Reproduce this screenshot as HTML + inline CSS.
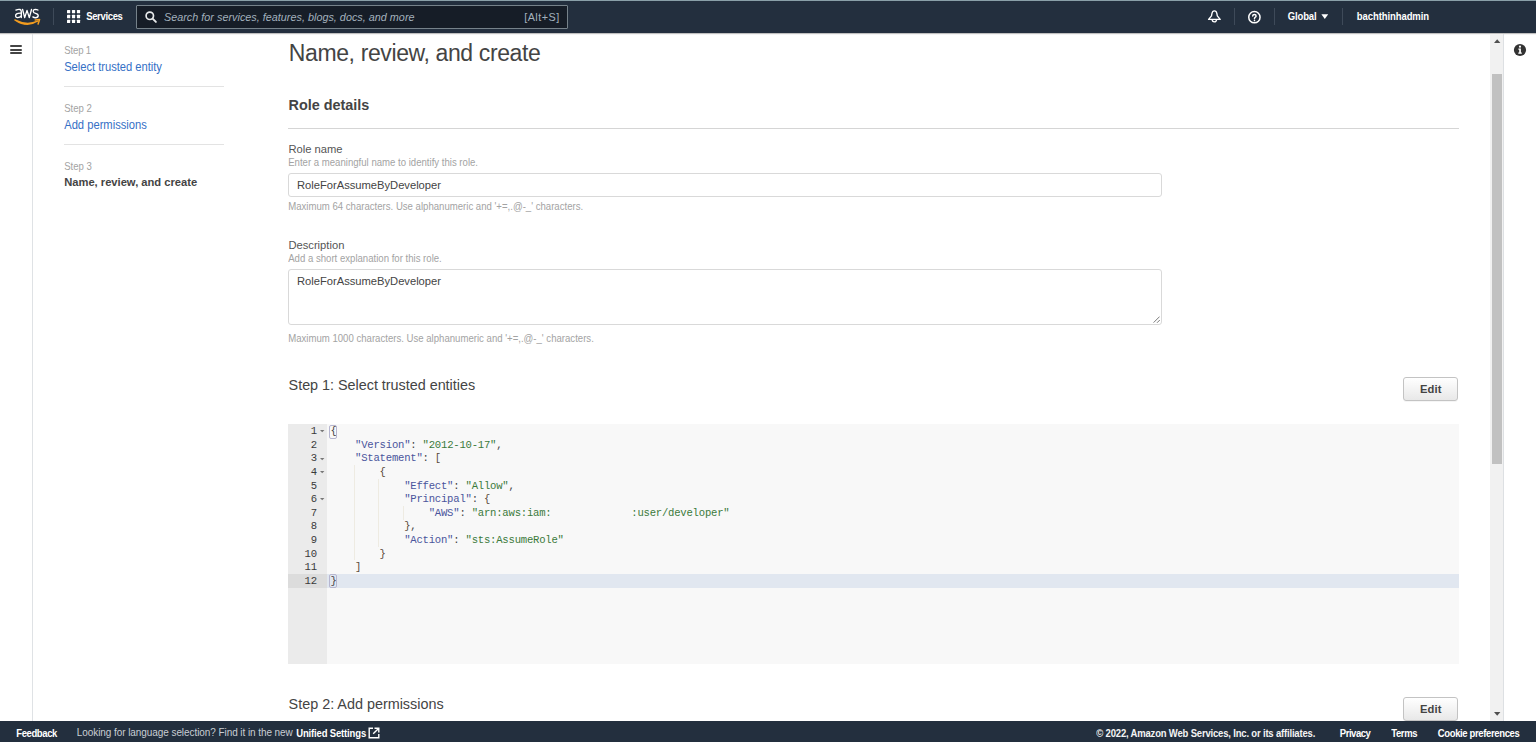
<!DOCTYPE html>
<html><head><meta charset="utf-8"><title>IAM - Create role</title>
<style>
html,body{margin:0;padding:0;width:1536px;height:742px;overflow:hidden;background:#fff;}
body{position:relative;font-family:"Liberation Sans", sans-serif;}
#nav{position:absolute;left:0;top:0;width:1536px;height:33px;background:#232f3e;box-shadow:0 1px 1px rgba(0,0,0,0.25);}
.t{position:absolute;white-space:nowrap;font-family:"Liberation Sans", sans-serif;}
.m{position:absolute;white-space:nowrap;font-family:"Liberation Mono", monospace;color:#333;}
</style></head><body>
<div id="nav"></div>
<div style="position:absolute;left:0;top:0;width:1536px;height:1px;background:#8aa0a8"></div>
<svg style="position:absolute;left:13px;top:7px" width="30" height="20" viewBox="0 0 30 20">
<g stroke="#ffffff" stroke-width="1.35" fill="none" stroke-linecap="round" stroke-linejoin="round">
<path d="M2.9 3.1 Q5.4 2.0 7.0 2.5 Q8.3 3.0 8.3 4.6 L8.3 10.6"/>
<path d="M8.3 6.2 Q5.2 6.0 3.6 6.9 Q2.4 7.7 2.6 9.1 Q2.9 10.7 4.7 10.6 Q6.9 10.4 8.3 9.0"/>
<path d="M9.6 2.5 L11.7 10.6 L14.0 3.4 L16.3 10.6 L18.5 2.5"/>
<path d="M24.9 3.0 Q23.9 2.3 22.4 2.3 Q20.2 2.4 20.2 4.2 Q20.3 5.8 22.5 6.3 Q25.2 6.9 25.2 8.6 Q25.1 10.7 22.5 10.7 Q20.9 10.7 19.9 9.9"/>
</g>
<path d="M1.8 12.9 Q13.8 21.2 24.8 14.1 Q13.8 19.0 1.8 12.9 Z" fill="#f29c1f" stroke="#f29c1f" stroke-width="1.2" stroke-linejoin="round"/>
<path d="M22.2 13.0 L26.6 12.6 L25.1 17.0" stroke="#f29c1f" stroke-width="1.5" fill="none" stroke-linejoin="round" stroke-linecap="round"/>
</svg>
<div style="position:absolute;left:53px;top:8px;width:1px;height:17px;background:#3e4a59"></div>
<svg style="position:absolute;left:67.1px;top:10.2px" width="14" height="14" viewBox="0 0 14 14"><rect x="0.00" y="0.00" width="3.2" height="3.3" rx="0.5" fill="#fff"/><rect x="4.95" y="0.00" width="3.2" height="3.3" rx="0.5" fill="#fff"/><rect x="9.90" y="0.00" width="3.2" height="3.3" rx="0.5" fill="#fff"/><rect x="0.00" y="4.85" width="3.2" height="3.3" rx="0.5" fill="#fff"/><rect x="4.95" y="4.85" width="3.2" height="3.3" rx="0.5" fill="#fff"/><rect x="9.90" y="4.85" width="3.2" height="3.3" rx="0.5" fill="#fff"/><rect x="0.00" y="9.70" width="3.2" height="3.3" rx="0.5" fill="#fff"/><rect x="4.95" y="9.70" width="3.2" height="3.3" rx="0.5" fill="#fff"/><rect x="9.90" y="9.70" width="3.2" height="3.3" rx="0.5" fill="#fff"/></svg>
<div class="t" style="left:86.2px;top:12.36px;font-size:9.5px;line-height:9.5px;color:#ffffff;font-weight:bold;font-style:normal;transform:scaleY(1.08);transform-origin:0 8.04px;letter-spacing:-0.342px;">Services</div>
<div style="position:absolute;left:136px;top:5px;width:430px;height:21.5px;background:#161d27;border:1px solid #76828a;border-radius:1px"></div>
<svg style="position:absolute;left:145px;top:11px" width="13" height="13" viewBox="0 0 13 13">
<circle cx="4.8" cy="4.8" r="3.7" stroke="#e8eaeb" stroke-width="1.7" fill="none"/>
<path d="M7.6 7.6 L10.9 10.9" stroke="#e8eaeb" stroke-width="1.9" stroke-linecap="round"/></svg>
<div class="t" style="left:164px;top:12.46px;font-size:10.8px;line-height:10.8px;color:#a3b1bd;font-weight:normal;font-style:italic;transform:scaleY(1.05);transform-origin:0 9.14px;letter-spacing:0.017px;">Search for services, features, blogs, docs, and more</div>
<div class="t" style="left:524.2px;top:11.66px;font-size:10.8px;line-height:10.8px;color:#a3b1bd;font-weight:normal;font-style:normal;letter-spacing:0.482px;">[Alt+S]</div>
<svg style="position:absolute;left:1204px;top:6px" width="20" height="20" viewBox="0 0 20 20">
<path d="M10.4 4.9 C9.1 4.9 8.2 5.9 7.9 7.7 L7.5 9.9 L4.6 13.4 L16.2 13.4 L13.3 9.9 L12.9 7.7 C12.6 5.9 11.7 4.9 10.4 4.9 Z" stroke="#fff" stroke-width="1.35" fill="none" stroke-linejoin="round"/>
<path d="M8.2 13.6 A2.2 2.2 0 0 0 12.6 13.6" stroke="#fff" stroke-width="1.35" fill="none"/></svg>
<div style="position:absolute;left:1234px;top:8px;width:1px;height:17px;background:#3e4a59"></div>
<svg style="position:absolute;left:1247px;top:9.5px" width="15" height="15" viewBox="0 0 15 15">
<circle cx="7.4" cy="7.2" r="5.65" stroke="#fff" stroke-width="1.5" fill="none"/>
<path d="M5.7 6.0 C5.7 5.0 6.5 4.5 7.4 4.5 C8.4 4.5 9.1 5.1 9.1 6.0 C9.1 7.1 7.5 7.3 7.5 8.4 L7.5 8.8" stroke="#fff" stroke-width="1.45" fill="none" stroke-linecap="round"/>
<circle cx="7.5" cy="10.6" r="0.8" fill="#fff"/></svg>
<div style="position:absolute;left:1273.5px;top:8px;width:1px;height:17px;background:#3e4a59"></div>
<div class="t" style="left:1287.8px;top:12.16px;font-size:9.5px;line-height:9.5px;color:#ffffff;font-weight:bold;font-style:normal;transform:scaleY(1.08);transform-origin:0 8.04px;letter-spacing:-0.152px;">Global</div>
<svg style="position:absolute;left:1321px;top:14px" width="8" height="6" viewBox="0 0 8 6"><path d="M0.4 0.3 L7.2 0.3 L3.8 5.1 Z" fill="#fff"/></svg>
<div style="position:absolute;left:1342px;top:8px;width:1px;height:17px;background:#3e4a59"></div>
<div class="t" style="left:1356.8px;top:12.16px;font-size:9.5px;line-height:9.5px;color:#ffffff;font-weight:bold;font-style:normal;transform:scaleY(1.08);transform-origin:0 8.04px;letter-spacing:-0.083px;">bachthinhadmin</div>
<div style="position:absolute;left:10px;top:45px;width:11.5px;height:2px;background:#444;border-radius:1px"></div>
<div style="position:absolute;left:10px;top:48.7px;width:11.5px;height:2px;background:#444;border-radius:1px"></div>
<div style="position:absolute;left:10px;top:52.4px;width:11.5px;height:2px;background:#444;border-radius:1px"></div>
<div style="position:absolute;left:32px;top:34px;width:1px;height:687px;background:#dfe2e5"></div>
<div class="t" style="left:64.2px;top:46.07px;font-size:9.6px;line-height:9.6px;color:#a3a3a3;font-weight:normal;font-style:normal;transform:scaleY(1.18);transform-origin:0 8.13px;letter-spacing:-0.150px;">Step 1</div>
<div class="t" style="left:64.2px;top:61.52px;font-size:11.2px;line-height:11.2px;color:#3570c6;font-weight:normal;font-style:normal;transform:scaleY(1.06);transform-origin:0 9.48px;letter-spacing:-0.028px;">Select trusted entity</div>
<div style="position:absolute;left:64px;top:86px;width:160px;height:1px;background:#e3e3e3"></div>
<div class="t" style="left:64.2px;top:104.07px;font-size:9.6px;line-height:9.6px;color:#a3a3a3;font-weight:normal;font-style:normal;transform:scaleY(1.18);transform-origin:0 8.13px;">Step 2</div>
<div class="t" style="left:64.2px;top:119.52px;font-size:11.2px;line-height:11.2px;color:#3570c6;font-weight:normal;font-style:normal;transform:scaleY(1.06);transform-origin:0 9.48px;">Add permissions</div>
<div style="position:absolute;left:64px;top:144px;width:160px;height:1px;background:#e3e3e3"></div>
<div class="t" style="left:64.2px;top:162.07px;font-size:9.6px;line-height:9.6px;color:#a3a3a3;font-weight:normal;font-style:normal;transform:scaleY(1.18);transform-origin:0 8.13px;">Step 3</div>
<div class="t" style="left:64.2px;top:177.32px;font-size:11.2px;line-height:11.2px;color:#444444;font-weight:bold;font-style:normal;letter-spacing:-0.013px;">Name, review, and create</div>
<div class="t" style="left:288.8px;top:41.93px;font-size:23.0px;line-height:23.0px;color:#444444;font-weight:normal;font-style:normal;letter-spacing:-0.382px;">Name, review, and create</div>
<div class="t" style="left:288.6px;top:97.81px;font-size:14.4px;line-height:14.4px;color:#444444;font-weight:bold;font-style:normal;transform:scaleY(1.07);transform-origin:0 12.19px;">Role details</div>
<div style="position:absolute;left:288px;top:128px;width:1171px;height:1px;background:#d5d5d5"></div>
<div class="t" style="left:288.4px;top:143.52px;font-size:11.2px;line-height:11.2px;color:#555555;font-weight:normal;font-style:normal;transform:scaleY(1.03);transform-origin:0 9.48px;">Role name</div>
<div class="t" style="left:288.2px;top:157.77px;font-size:9.6px;line-height:9.6px;color:#a3a3a3;font-weight:normal;font-style:normal;transform:scaleY(1.18);transform-origin:0 8.13px;">Enter a meaningful name to identify this role.</div>
<div style="position:absolute;left:288px;top:173px;width:872px;height:22px;border:1px solid #d9d9d9;border-radius:3px;background:#fff"></div>
<div class="t" style="left:297px;top:180.12px;font-size:11.2px;line-height:11.2px;color:#444444;font-weight:normal;font-style:normal;transform:scaleY(1.03);transform-origin:0 9.48px;letter-spacing:-0.012px;">RoleForAssumeByDeveloper</div>
<div class="t" style="left:288.2px;top:201.77px;font-size:9.6px;line-height:9.6px;color:#a3a3a3;font-weight:normal;font-style:normal;transform:scaleY(1.18);transform-origin:0 8.13px;">Maximum 64 characters. Use alphanumeric and '+=,.@-_' characters.</div>
<div class="t" style="left:288.4px;top:239.52px;font-size:11.2px;line-height:11.2px;color:#555555;font-weight:normal;font-style:normal;transform:scaleY(1.03);transform-origin:0 9.48px;">Description</div>
<div class="t" style="left:288.2px;top:253.87px;font-size:9.6px;line-height:9.6px;color:#a3a3a3;font-weight:normal;font-style:normal;transform:scaleY(1.18);transform-origin:0 8.13px;">Add a short explanation for this role.</div>
<div style="position:absolute;left:288px;top:269px;width:872px;height:54px;border:1px solid #d9d9d9;border-radius:3px;background:#fff"></div>
<svg style="position:absolute;left:1151px;top:314px" width="9" height="9" viewBox="0 0 9 9"><path d="M2.6 8.6 L8.6 2.6 M6.0 8.8 L8.8 6.0" stroke="#6a6a6a" stroke-width="0.9"/></svg>
<div class="t" style="left:297px;top:276.12px;font-size:11.2px;line-height:11.2px;color:#444444;font-weight:normal;font-style:normal;transform:scaleY(1.03);transform-origin:0 9.48px;letter-spacing:-0.012px;">RoleForAssumeByDeveloper</div>
<div class="t" style="left:288.2px;top:333.87px;font-size:9.6px;line-height:9.6px;color:#a3a3a3;font-weight:normal;font-style:normal;transform:scaleY(1.18);transform-origin:0 8.13px;">Maximum 1000 characters. Use alphanumeric and '+=,.@-_' characters.</div>
<div class="t" style="left:288.6px;top:377.61px;font-size:14.4px;line-height:14.4px;color:#444444;font-weight:normal;font-style:normal;transform:scaleY(1.05);transform-origin:0 12.19px;letter-spacing:-0.023px;">Step 1: Select trusted entities</div>
<div style="position:absolute;left:1403px;top:377px;width:53px;height:21.5px;border:1px solid #c3c3c3;border-radius:3px;background:linear-gradient(#ffffff,#e8e8e8);box-shadow:0 1px 0 rgba(0,0,0,0.04)"></div>
<div class="t" style="left:1420.0px;top:383.92px;font-size:11.2px;line-height:11.2px;color:#444444;font-weight:bold;font-style:normal;letter-spacing:0.120px;">Edit</div>
<div style="position:absolute;left:288px;top:424px;width:1171px;height:240px;background:#f8f8f8"></div>
<div style="position:absolute;left:288px;top:424px;width:39px;height:240px;background:#ebebeb"></div>
<div style="position:absolute;left:327px;top:574.00px;width:1132px;height:13.6px;background:#e1e7f0"></div>
<div style="position:absolute;left:288px;top:574.00px;width:39px;height:13.6px;background:#dcdcdc"></div>
<div class="m" style="left:330.5px;top:425.28px;font-size:10.6px;line-height:13.6px;letter-spacing:-0.220px"><span style="color:#444">{</span></div>
<div class="m" style="left:288px;width:28.9px;text-align:right;top:425.28px;font-size:10.6px;line-height:13.6px;letter-spacing:-0.220px;color:#3a3a3a">1</div>
<div class="m" style="left:330.5px;top:438.88px;font-size:10.6px;line-height:13.6px;letter-spacing:-0.220px">&nbsp;&nbsp;&nbsp;&nbsp;<span style="color:#4a559c">"Version"</span><span style="color:#444">: </span><span style="color:#3b7a3b">"2012-10-17"</span><span style="color:#444">,</span></div>
<div class="m" style="left:288px;width:28.9px;text-align:right;top:438.88px;font-size:10.6px;line-height:13.6px;letter-spacing:-0.220px;color:#3a3a3a">2</div>
<div class="m" style="left:330.5px;top:452.48px;font-size:10.6px;line-height:13.6px;letter-spacing:-0.220px">&nbsp;&nbsp;&nbsp;&nbsp;<span style="color:#4a559c">"Statement"</span><span style="color:#444">: </span><span style="color:#5a4a38">[</span></div>
<div class="m" style="left:288px;width:28.9px;text-align:right;top:452.48px;font-size:10.6px;line-height:13.6px;letter-spacing:-0.220px;color:#3a3a3a">3</div>
<div class="m" style="left:330.5px;top:466.08px;font-size:10.6px;line-height:13.6px;letter-spacing:-0.220px">&nbsp;&nbsp;&nbsp;&nbsp;&nbsp;&nbsp;&nbsp;&nbsp;<span style="color:#5a4a38">{</span></div>
<div class="m" style="left:288px;width:28.9px;text-align:right;top:466.08px;font-size:10.6px;line-height:13.6px;letter-spacing:-0.220px;color:#3a3a3a">4</div>
<div class="m" style="left:330.5px;top:479.68px;font-size:10.6px;line-height:13.6px;letter-spacing:-0.220px">&nbsp;&nbsp;&nbsp;&nbsp;&nbsp;&nbsp;&nbsp;&nbsp;&nbsp;&nbsp;&nbsp;&nbsp;<span style="color:#4a559c">"Effect"</span><span style="color:#444">: </span><span style="color:#3b7a3b">"Allow"</span><span style="color:#444">,</span></div>
<div class="m" style="left:288px;width:28.9px;text-align:right;top:479.68px;font-size:10.6px;line-height:13.6px;letter-spacing:-0.220px;color:#3a3a3a">5</div>
<div class="m" style="left:330.5px;top:493.28px;font-size:10.6px;line-height:13.6px;letter-spacing:-0.220px">&nbsp;&nbsp;&nbsp;&nbsp;&nbsp;&nbsp;&nbsp;&nbsp;&nbsp;&nbsp;&nbsp;&nbsp;<span style="color:#4a559c">"Principal"</span><span style="color:#444">: </span><span style="color:#5a4a38">{</span></div>
<div class="m" style="left:288px;width:28.9px;text-align:right;top:493.28px;font-size:10.6px;line-height:13.6px;letter-spacing:-0.220px;color:#3a3a3a">6</div>
<div class="m" style="left:330.5px;top:506.88px;font-size:10.6px;line-height:13.6px;letter-spacing:-0.220px">&nbsp;&nbsp;&nbsp;&nbsp;&nbsp;&nbsp;&nbsp;&nbsp;&nbsp;&nbsp;&nbsp;&nbsp;&nbsp;&nbsp;&nbsp;&nbsp;<span style="color:#4a559c">"AWS"</span><span style="color:#444">: </span><span style="color:#3b7a3b">"arn:aws:iam:&nbsp;&nbsp;&nbsp;&nbsp;&nbsp;&nbsp;&nbsp;&nbsp;&nbsp;&nbsp;&nbsp;&nbsp;&nbsp;:user/developer"</span></div>
<div class="m" style="left:288px;width:28.9px;text-align:right;top:506.88px;font-size:10.6px;line-height:13.6px;letter-spacing:-0.220px;color:#3a3a3a">7</div>
<div class="m" style="left:330.5px;top:520.48px;font-size:10.6px;line-height:13.6px;letter-spacing:-0.220px">&nbsp;&nbsp;&nbsp;&nbsp;&nbsp;&nbsp;&nbsp;&nbsp;&nbsp;&nbsp;&nbsp;&nbsp;<span style="color:#5a4a38">}</span><span style="color:#444">,</span></div>
<div class="m" style="left:288px;width:28.9px;text-align:right;top:520.48px;font-size:10.6px;line-height:13.6px;letter-spacing:-0.220px;color:#3a3a3a">8</div>
<div class="m" style="left:330.5px;top:534.08px;font-size:10.6px;line-height:13.6px;letter-spacing:-0.220px">&nbsp;&nbsp;&nbsp;&nbsp;&nbsp;&nbsp;&nbsp;&nbsp;&nbsp;&nbsp;&nbsp;&nbsp;<span style="color:#4a559c">"Action"</span><span style="color:#444">: </span><span style="color:#3b7a3b">"sts:AssumeRole"</span></div>
<div class="m" style="left:288px;width:28.9px;text-align:right;top:534.08px;font-size:10.6px;line-height:13.6px;letter-spacing:-0.220px;color:#3a3a3a">9</div>
<div class="m" style="left:330.5px;top:547.68px;font-size:10.6px;line-height:13.6px;letter-spacing:-0.220px">&nbsp;&nbsp;&nbsp;&nbsp;&nbsp;&nbsp;&nbsp;&nbsp;<span style="color:#5a4a38">}</span></div>
<div class="m" style="left:288px;width:28.9px;text-align:right;top:547.68px;font-size:10.6px;line-height:13.6px;letter-spacing:-0.220px;color:#3a3a3a">10</div>
<div class="m" style="left:330.5px;top:561.28px;font-size:10.6px;line-height:13.6px;letter-spacing:-0.220px">&nbsp;&nbsp;&nbsp;&nbsp;<span style="color:#5a4a38">]</span></div>
<div class="m" style="left:288px;width:28.9px;text-align:right;top:561.28px;font-size:10.6px;line-height:13.6px;letter-spacing:-0.220px;color:#3a3a3a">11</div>
<div class="m" style="left:330.5px;top:574.88px;font-size:10.6px;line-height:13.6px;letter-spacing:-0.220px"><span style="color:#444">}</span></div>
<div class="m" style="left:288px;width:28.9px;text-align:right;top:574.88px;font-size:10.6px;line-height:13.6px;letter-spacing:-0.220px;color:#3a3a3a">12</div>
<svg style="position:absolute;left:320px;top:430.40px" width="5" height="3" viewBox="0 0 5 3"><path d="M0 0 L4.4 0 L2.2 2.2 Z" fill="#777"/></svg>
<svg style="position:absolute;left:320px;top:457.60px" width="5" height="3" viewBox="0 0 5 3"><path d="M0 0 L4.4 0 L2.2 2.2 Z" fill="#777"/></svg>
<svg style="position:absolute;left:320px;top:471.20px" width="5" height="3" viewBox="0 0 5 3"><path d="M0 0 L4.4 0 L2.2 2.2 Z" fill="#777"/></svg>
<svg style="position:absolute;left:320px;top:498.40px" width="5" height="3" viewBox="0 0 5 3"><path d="M0 0 L4.4 0 L2.2 2.2 Z" fill="#777"/></svg>
<div style="position:absolute;left:353.9px;top:465.20px;width:1px;height:95.20px;background:#eeebe2"></div>
<div style="position:absolute;left:378.4px;top:478.80px;width:1px;height:68.00px;background:#eeebe2"></div>
<div style="position:absolute;left:403.0px;top:506.00px;width:1px;height:13.60px;background:#eeebe2"></div>
<div style="position:absolute;left:329.2px;top:424.60px;width:5.9px;height:12.1px;border:1px solid #b6b6d0;border-radius:2px"></div>
<div style="position:absolute;left:329.2px;top:574.20px;width:5.9px;height:12.1px;border:1px solid #b6b6d0;border-radius:2px"></div>
<div class="t" style="left:288.6px;top:696.81px;font-size:14.4px;line-height:14.4px;color:#444444;font-weight:normal;font-style:normal;transform:scaleY(1.05);transform-origin:0 12.19px;letter-spacing:-0.009px;">Step 2: Add permissions</div>
<div style="position:absolute;left:1403px;top:697px;width:53px;height:21.5px;border:1px solid #c3c3c3;border-radius:3px;background:linear-gradient(#ffffff,#e8e8e8);box-shadow:0 1px 0 rgba(0,0,0,0.04)"></div>
<div class="t" style="left:1420.0px;top:703.92px;font-size:11.2px;line-height:11.2px;color:#444444;font-weight:bold;font-style:normal;letter-spacing:0.120px;">Edit</div>
<div style="position:absolute;left:1490px;top:34px;width:13px;height:687px;background:#f1f1f1"></div>
<div style="position:absolute;left:1503px;top:34px;width:1px;height:687px;background:#dde0e3"></div>
<div style="position:absolute;left:1492px;top:74px;width:10px;height:390px;background:#c1c1c1"></div>
<svg style="position:absolute;left:1494px;top:39px" width="7" height="4" viewBox="0 0 7 4"><path d="M0 3.9 L3.2 0.2 L6.4 3.9 Z" fill="#505050"/></svg>
<svg style="position:absolute;left:1494px;top:712px" width="7" height="4" viewBox="0 0 7 4"><path d="M0 0.1 L6.4 0.1 L3.2 3.8 Z" fill="#505050"/></svg>
<svg style="position:absolute;left:1513px;top:42.5px" width="14" height="14" viewBox="0 0 14 14">
<circle cx="7" cy="7" r="6.1" fill="#333"/>
<circle cx="7" cy="3.7" r="1.1" fill="#fff"/>
<path d="M5.4 5.6 L7.9 5.6 L7.9 9.6 L8.8 9.6 L8.8 10.7 L5.3 10.7 L5.3 9.6 L6.2 9.6 L6.2 6.7 L5.4 6.7 Z" fill="#fff"/></svg>
<div style="position:absolute;left:0;top:721px;width:1536px;height:21px;background:#232f3e"></div>
<div class="t" style="left:16.3px;top:728.76px;font-size:9.5px;line-height:9.5px;color:#ffffff;font-weight:bold;font-style:normal;transform:scaleY(1.08);transform-origin:0 8.04px;letter-spacing:-0.404px;">Feedback</div>
<div class="t" style="left:76.8px;top:728.33px;font-size:10px;line-height:10px;color:#c9ced4;font-weight:normal;font-style:normal;transform:scaleY(1.05);transform-origin:0 8.46px;letter-spacing:-0.073px;">Looking for language selection? Find it in the new</div>
<div class="t" style="left:296.2px;top:728.76px;font-size:9.5px;line-height:9.5px;color:#ffffff;font-weight:bold;font-style:normal;transform:scaleY(1.08);transform-origin:0 8.04px;letter-spacing:-0.154px;">Unified Settings</div>
<svg style="position:absolute;left:367.5px;top:726.5px" width="12" height="12" viewBox="0 0 12 12">
<path d="M5 1.2 L1.2 1.2 L1.2 10.8 L10.8 10.8 L10.8 7" stroke="#fff" stroke-width="1.4" fill="none"/>
<path d="M6.5 1.2 L10.8 1.2 L10.8 5.5 M10.8 1.2 L5.2 6.8" stroke="#fff" stroke-width="1.4" fill="none"/></svg>
<div class="t" style="left:1096.3px;top:728.56px;font-size:9.5px;line-height:9.5px;color:#f4f4f4;font-weight:bold;font-style:normal;transform:scaleY(1.08);transform-origin:0 8.04px;letter-spacing:-0.181px;">© 2022, Amazon Web Services, Inc. or its affiliates.</div>
<div class="t" style="left:1339.8px;top:728.56px;font-size:9.5px;line-height:9.5px;color:#ffffff;font-weight:bold;font-style:normal;transform:scaleY(1.08);transform-origin:0 8.04px;letter-spacing:-0.469px;">Privacy</div>
<div class="t" style="left:1391.2px;top:728.56px;font-size:9.5px;line-height:9.5px;color:#ffffff;font-weight:bold;font-style:normal;transform:scaleY(1.08);transform-origin:0 8.04px;letter-spacing:-0.353px;">Terms</div>
<div class="t" style="left:1437.8px;top:728.56px;font-size:9.5px;line-height:9.5px;color:#ffffff;font-weight:bold;font-style:normal;transform:scaleY(1.08);transform-origin:0 8.04px;letter-spacing:-0.364px;">Cookie preferences</div>
</body></html>
